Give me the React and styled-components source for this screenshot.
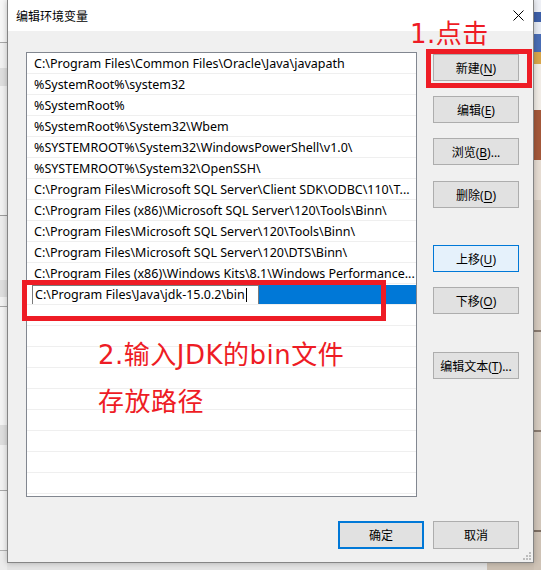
import React from 'react'
import styled, { createGlobalStyle } from 'styled-components'

const GlobalStyle = createGlobalStyle`
  html, body {
    margin: 0;
    padding: 0;
  }
  body {
    width: 541px;
    height: 570px;
    overflow: hidden;
    font-family: "Noto Sans", "Noto Sans CJK SC", sans-serif;
    background: #e9e9e9;
  }
`

const Desktop = styled.div`
  position: relative;
  display: flex;
  width: 541px;
  height: 570px;
  overflow: hidden;
`

const LeftStrip = styled.div`
  width: 7px;
  height: 570px;
  flex: none;
  background: linear-gradient(
    to bottom,
    #f7f7f7 0 42px, #a8a8a8 42px 43px, #f2f2f2 43px 68px,
    #dedede 68px 86px, #f2f2f2 86px 215px, #9c9c9c 215px 216px,
    #ececec 216px 280px, #dedede 280px 297px, #f2f2f2 297px 306px,
    #a8a8a8 306px 307px, #f4f4f4 307px 425px, #dedede 425px 445px,
    #f2f2f2 445px 490px, #a8a8a8 490px 491px, #f4f4f4 491px 550px,
    #b0b0b0 550px 551px, #ececec 551px
  );
`

const RightStrip = styled.div`
  flex: 1;
  height: 570px;
  background: linear-gradient(
    to bottom,
    #eef0f6 0 12px, #3d5fa8 12px 22px, #e8ecf4 22px 34px,
    #4a6db5 34px 52px, #d9a64a 52px 64px, #f1ece6 64px 110px,
    #a4583a 110px 160px, #e6dcd2 160px 200px, #d6cbbf 200px 330px,
    #8a7b70 330px 332px, #d6ccc1 332px 430px, #8a7b70 430px 432px,
    #d2c7bb 432px 530px, #7d6e63 530px 532px, #cfc3b6 532px
  );
`

const Middle = styled.div`
  display: flex;
  flex-direction: column;
  width: 527px;
  flex: none;
`

const Below = styled.div`
  flex: 1;
  background: linear-gradient(to right, #e4e4e4 0 480px, #cbbfb2 480px);
`

const Dialog = styled.div`
  position: relative;
  box-sizing: border-box;
  width: 527px;
  height: 563px;
  display: flex;
  flex-direction: column;
  background: #f0f0f0;
  border: 1px solid #858585;
  border-top: none;
  box-shadow: 0 0 6px rgba(0, 0, 0, 0.25);
`

const TitleBar = styled.div`
  height: 31px;
  flex: none;
  display: flex;
  align-items: center;
  justify-content: space-between;
  padding-left: 8px;
  background: #ffffff;
  font-size: 12px;
  color: #000;
`

const CloseIcon = styled.svg`
  width: 11px;
  height: 11px;
  margin-right: 9px;
  margin-top: -1px;
`

const Body = styled.div`
  flex: 1;
  display: flex;
  flex-direction: column;
  padding: 21px 14px 14px 18px;
`

const MainRow = styled.div`
  display: flex;
  gap: 16px;
  align-items: flex-start;
`

const ListBox = styled.div`
  box-sizing: border-box;
  width: 391px;
  height: 445px;
  background: #fff;
  border: 1px solid #828790;
  overflow: hidden;
`

const Row = styled.div`
  box-sizing: border-box;
  height: 21px;
  display: flex;
  align-items: center;
  padding-left: ${p => (p.$editing ? '5px' : '7px')};
  padding-top: 1px;
  border-bottom: 1px solid #efefef;
  font-size: 12.5px;
  color: #000;
  white-space: nowrap;
  overflow: hidden;
`

const EditBox = styled.div`
  box-sizing: border-box;
  width: 227px;
  height: 20px;
  display: flex;
  align-items: center;
  padding-left: 2px;
  background: #fff;
  border: 1px solid #7a7a7a;
`

const Caret = styled.span`
  display: inline-block;
  width: 1px;
  height: 14px;
  margin-left: 1px;
  background: #000;
`

const SelFill = styled.div`
  flex: 1;
  height: 20px;
  background: #0078d7;
`

const ButtonCol = styled.div`
  display: flex;
  flex-direction: column;
  width: 86px;
`

const Button = styled.button`
  box-sizing: border-box;
  width: 86px;
  height: ${p => p.$h || 27}px;
  margin-top: ${p => p.$mt || 0}px;
  padding: 0;
  font-family: "Noto Sans", "Noto Sans CJK SC", sans-serif;
  font-size: 12px;
  color: #000;
  background: ${p => (p.$hot ? '#e5f1fb' : '#e1e1e1')};
  border: ${p => (p.$primary ? '2px solid #0078d7' : p.$hot ? '1px solid #0078d7' : '1px solid #adadad')};
  u {
    text-decoration: underline;
    text-underline-offset: 2px;
  }
`

const Footer = styled.div`
  display: flex;
  justify-content: flex-end;
  gap: 9px;
  margin-top: 24px;
`

const Grip = styled.svg`
  position: absolute;
  right: 2px;
  bottom: 2px;
  width: 8px;
  height: 8px;
`

const Note = styled.div`
  position: absolute;
  left: ${p => p.$x}px;
  top: ${p => p.$y}px;
  color: #ee1c25;
  font-family: "DejaVu Sans", "Noto Sans CJK SC", sans-serif;
  font-size: 26px;
  line-height: 47px;
  letter-spacing: 0.5px;
  white-space: nowrap;
`

const RedBox = styled.div`
  position: absolute;
  box-sizing: border-box;
  left: ${p => p.$x}px;
  top: ${p => p.$y}px;
  width: ${p => p.$w}px;
  height: ${p => p.$h}px;
  border: 5px solid #ee1c25;
`

const paths = [
  'C:\\Program Files\\Common Files\\Oracle\\Java\\javapath',
  '%SystemRoot%\\system32',
  '%SystemRoot%',
  '%SystemRoot%\\System32\\Wbem',
  '%SYSTEMROOT%\\System32\\WindowsPowerShell\\v1.0\\',
  '%SYSTEMROOT%\\System32\\OpenSSH\\',
  'C:\\Program Files\\Microsoft SQL Server\\Client SDK\\ODBC\\110\\T...',
  'C:\\Program Files (x86)\\Microsoft SQL Server\\120\\Tools\\Binn\\',
  'C:\\Program Files\\Microsoft SQL Server\\120\\Tools\\Binn\\',
  'C:\\Program Files\\Microsoft SQL Server\\120\\DTS\\Binn\\',
  'C:\\Program Files (x86)\\Windows Kits\\8.1\\Windows Performance...',
]

const sideButtons = [
  { label: '新建', key: 'N', mt: 2 },
  { label: '编辑', key: 'E', mt: 15 },
  { label: '浏览', key: 'B', mt: 15, dots: true },
  { label: '删除', key: 'D', mt: 16 },
  { label: '上移', key: 'U', mt: 37, hot: true },
  { label: '下移', key: 'O', mt: 15 },
  { label: '编辑文本', key: 'T', mt: 38, dots: true },
]

function App() {
  const empty = Array.from({ length: 10 })

  return (
    <Desktop>
      <GlobalStyle />
      <LeftStrip />
      <Middle>
        <Dialog>
          <TitleBar>
            <span>编辑环境变量</span>
            <CloseIcon viewBox="0 0 11 11">
              <path d="M0.5 0.5 L10.5 10.5 M10.5 0.5 L0.5 10.5" stroke="#000" strokeWidth="1" fill="none" />
            </CloseIcon>
          </TitleBar>
          <Body>
            <MainRow>
              <ListBox>
                {paths.map((p, i) => (
                  <Row key={i}>{p}</Row>
                ))}
                <Row $editing>
                  <EditBox>
                    C:\Program Files\Java\jdk-15.0.2\bin
                    <Caret />
                  </EditBox>
                  <SelFill />
                </Row>
                {empty.map((_, i) => (
                  <Row key={'e' + i} />
                ))}
              </ListBox>
              <ButtonCol>
                {sideButtons.map(b => (
                  <Button key={b.key} $mt={b.mt} $hot={b.hot}>
                    {b.label}(<u>{b.key}</u>){b.dots ? '...' : ''}
                  </Button>
                ))}
              </ButtonCol>
            </MainRow>
            <Footer>
              <Button $primary $h={28}>确定</Button>
              <Button $h={28}>取消</Button>
            </Footer>
          </Body>
          <Grip viewBox="0 0 8 8">
            <rect x="6" y="0" width="2" height="2" fill="#bdbdbd" />
            <rect x="3" y="3" width="2" height="2" fill="#bdbdbd" />
            <rect x="6" y="3" width="2" height="2" fill="#bdbdbd" />
            <rect x="0" y="6" width="2" height="2" fill="#bdbdbd" />
            <rect x="3" y="6" width="2" height="2" fill="#bdbdbd" />
            <rect x="6" y="6" width="2" height="2" fill="#bdbdbd" />
          </Grip>
        </Dialog>
        <Below />
      </Middle>
      <RightStrip />

      <RedBox $x={426} $y={49} $w={106} $h={39} />
      <RedBox $x={22} $y={280} $w={364} $h={41} />
      <Note $x={410} $y={11}>1.点击</Note>
      <Note $x={98} $y={332}>
        2.输入JDK的bin文件
        <br />
        存放路径
      </Note>
    </Desktop>
  )
}

export default App
